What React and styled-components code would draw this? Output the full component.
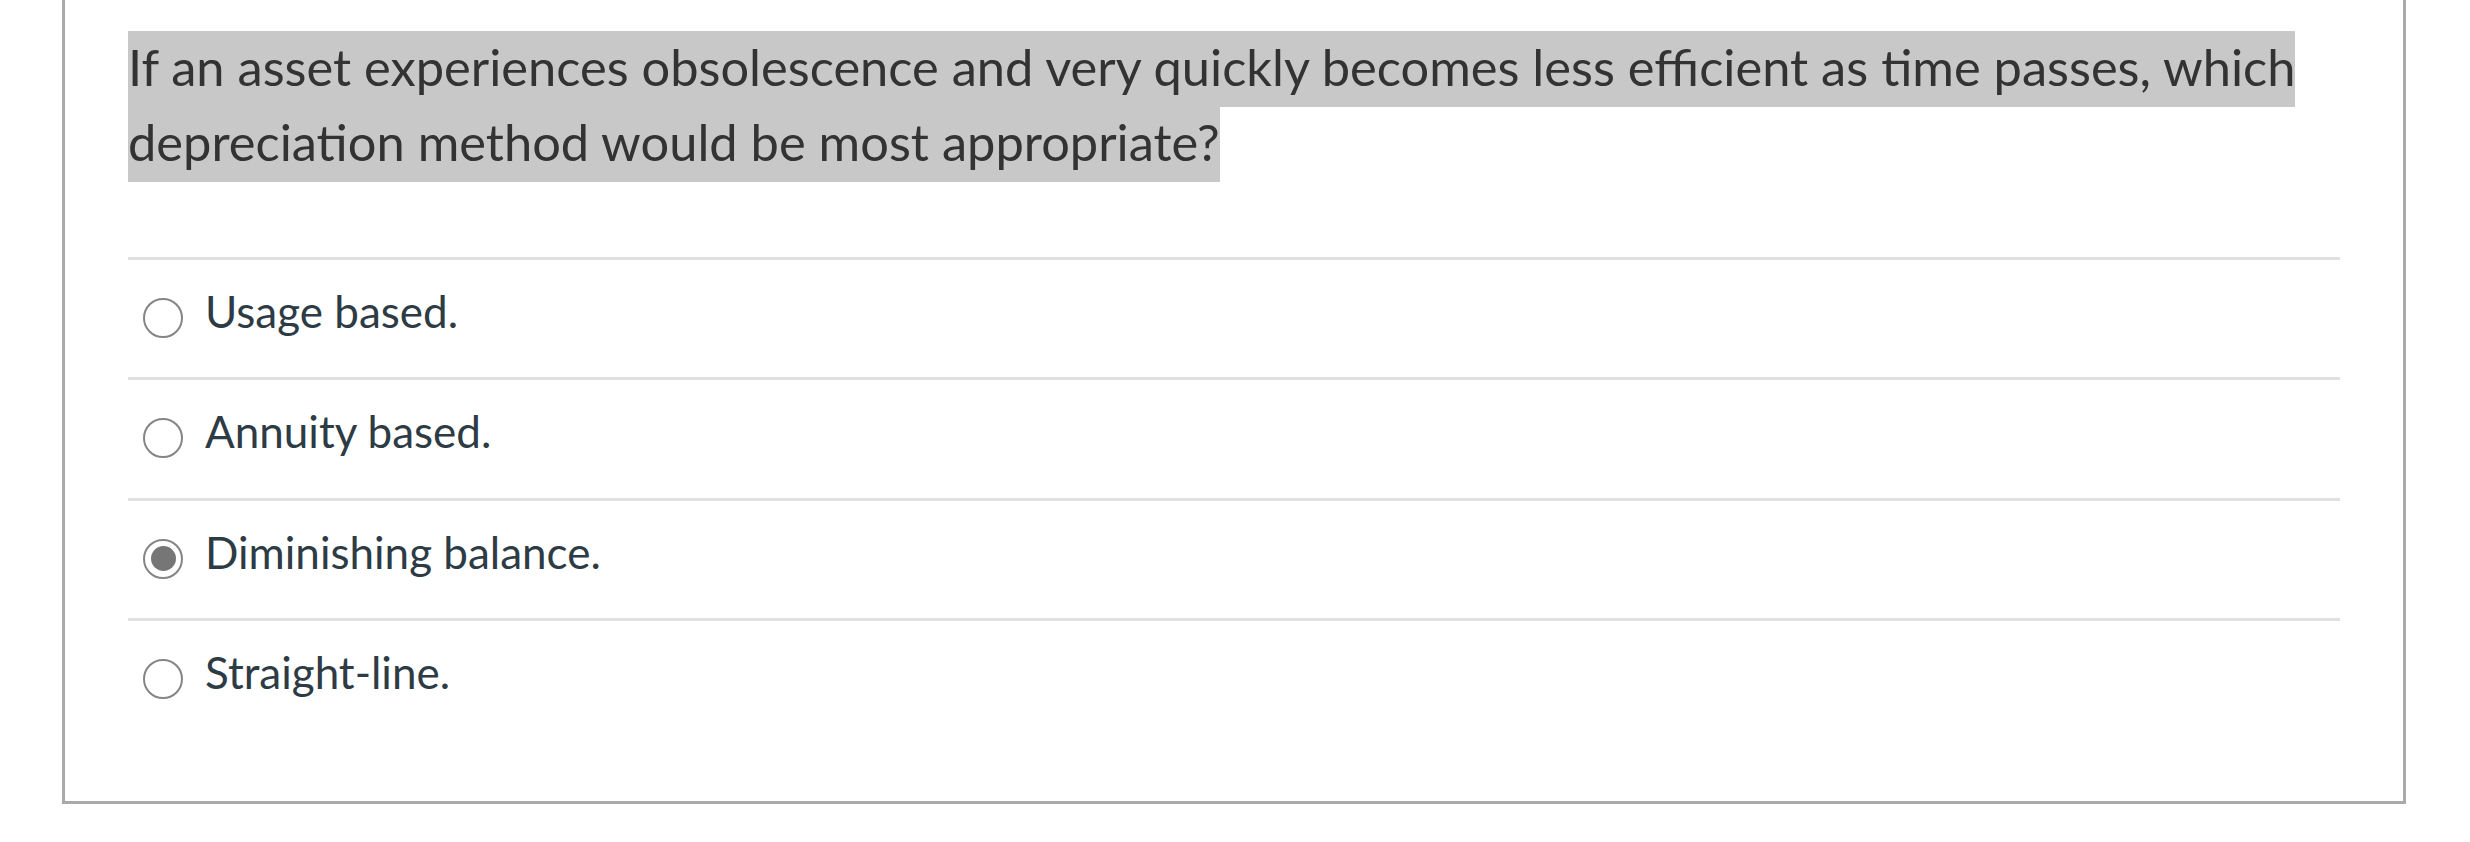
import React from "react";
import styled, { createGlobalStyle } from "styled-components";

const Global = createGlobalStyle`
  html, body { margin: 0; padding: 0; background: #ffffff; }
  body { font-family: Lato, "Open Sans", sans-serif; }
`;

const Card = styled.div`
  box-sizing: border-box;
  width: 2344px;
  margin-left: 62px;
  border: 3px solid #aaaaaa;
  border-top: none;
  padding: 29px 63px 62px 63px;
  background: #fff;
`;

const Question = styled.div`
  font-family: Lato, "Open Sans", sans-serif;
  font-size: 50.6px;
  line-height: 75px;
  color: #333333;
  margin-bottom: 78px;
`;

const Highlight = styled.span`
  background: #c8c8c8;
  padding: 4.6px 0 9.8px;
  box-decoration-break: clone;
  -webkit-box-decoration-break: clone;
`;

const Answers = styled.div`
  display: flex;
  flex-direction: column;
`;

const Row = styled.label`
  display: flex;
  align-items: flex-start;
  gap: 22px;
  height: 117.4px;
  box-sizing: content-box;
  border-top: 3px solid #e0e0e0;
  padding-left: 15px;
`;

const Radio = styled.span`
  box-sizing: border-box;
  flex: none;
  width: 40px;
  height: 40px;
  margin-top: 38px;
  border-radius: 50%;
  border: 2px solid #858585;
  background: #fff;
  display: flex;
  align-items: center;
  justify-content: center;
  &::after {
    content: "";
    display: ${(p) => (p.$checked ? "block" : "none")};
    width: 25px;
    height: 25px;
    border-radius: 50%;
    background: #767676;
  }
`;

const Label = styled.span`
  margin-top: 18px;
  font-family: Lato, "Open Sans", sans-serif;
  font-size: 44px;
  line-height: 66px;
  color: #2d3b45;
`;

const answers = [
  { text: "Usage based.", checked: false },
  { text: "Annuity based.", checked: false },
  { text: "Diminishing balance.", checked: true },
  { text: "Straight-line.", checked: false },
];

export default function App() {
  return (
    <>
      <Global />
      <Card>
        <Question>
          <Highlight>
            If an asset experiences obsolescence and very quickly becomes less
            efficient as time passes, which depreciation method would be most
            appropriate?
          </Highlight>
        </Question>
        <Answers>
          {answers.map((a) => (
            <Row key={a.text}>
              <Radio $checked={a.checked} />
              <Label>{a.text}</Label>
            </Row>
          ))}
        </Answers>
      </Card>
    </>
  );
}
